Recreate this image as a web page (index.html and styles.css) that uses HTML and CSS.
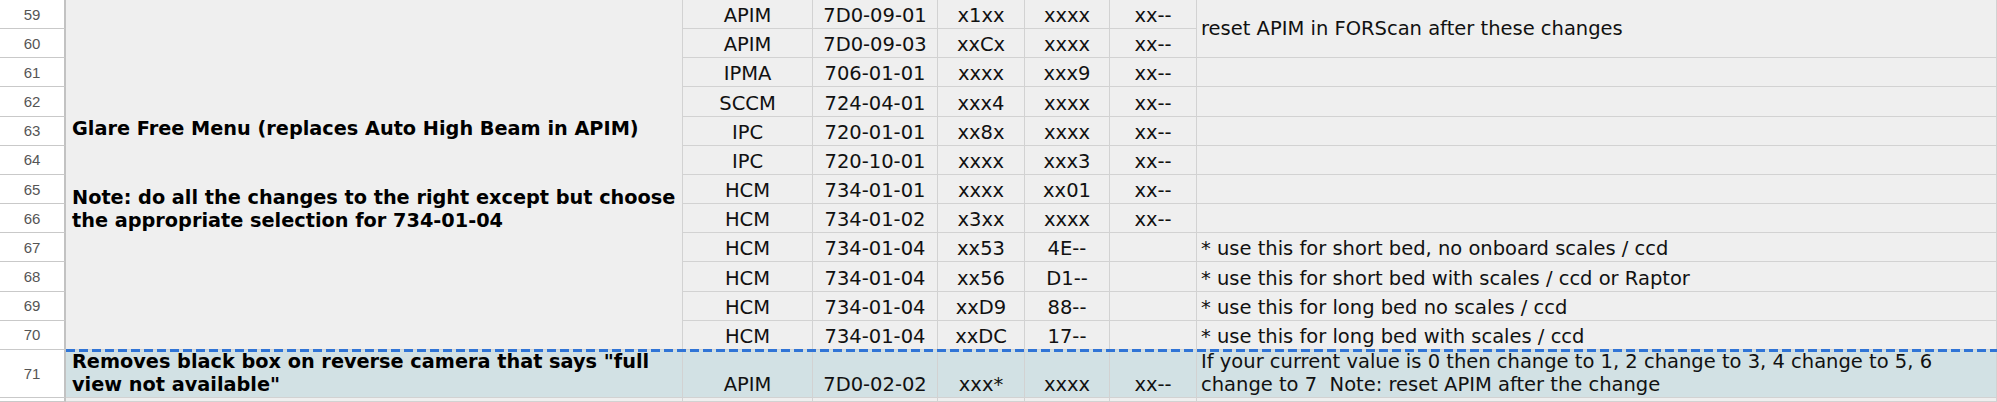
FILE: index.html
```html
<!DOCTYPE html>
<html>
<head>
<meta charset="utf-8">
<link rel="stylesheet" href="styles.css">
</head>
<body>
<div class="sheet">
  <div class="num">59</div>
  <div class="cell merged-b"><div class="btext">Glare Free Menu (replaces Auto High Beam in APIM)<br><br><br>Note: do all the changes to the right except but choose the appropriate selection for 734-01-04</div></div>
  <div class="cell c">APIM</div><div class="cell c">7D0-09-01</div><div class="cell c">x1xx</div><div class="cell c">xxxx</div><div class="cell c">xx--</div>
  <div class="cell h merged-h">reset APIM in FORScan after these changes</div>

  <div class="num">60</div>
  <div class="cell c">APIM</div><div class="cell c">7D0-09-03</div><div class="cell c">xxCx</div><div class="cell c">xxxx</div><div class="cell c">xx--</div>

  <div class="num">61</div>
  <div class="cell c">IPMA</div><div class="cell c">706-01-01</div><div class="cell c">xxxx</div><div class="cell c">xxx9</div><div class="cell c">xx--</div><div class="cell h"></div>

  <div class="num">62</div>
  <div class="cell c">SCCM</div><div class="cell c">724-04-01</div><div class="cell c">xxx4</div><div class="cell c">xxxx</div><div class="cell c">xx--</div><div class="cell h"></div>

  <div class="num">63</div>
  <div class="cell c">IPC</div><div class="cell c">720-01-01</div><div class="cell c">xx8x</div><div class="cell c">xxxx</div><div class="cell c">xx--</div><div class="cell h"></div>

  <div class="num">64</div>
  <div class="cell c">IPC</div><div class="cell c">720-10-01</div><div class="cell c">xxxx</div><div class="cell c">xxx3</div><div class="cell c">xx--</div><div class="cell h"></div>

  <div class="num">65</div>
  <div class="cell c">HCM</div><div class="cell c">734-01-01</div><div class="cell c">xxxx</div><div class="cell c">xx01</div><div class="cell c">xx--</div><div class="cell h"></div>

  <div class="num">66</div>
  <div class="cell c">HCM</div><div class="cell c">734-01-02</div><div class="cell c">x3xx</div><div class="cell c">xxxx</div><div class="cell c">xx--</div><div class="cell h"></div>

  <div class="num">67</div>
  <div class="cell c">HCM</div><div class="cell c">734-01-04</div><div class="cell c">xx53</div><div class="cell c">4E--</div><div class="cell c"></div><div class="cell h">* use this for short bed, no onboard scales / ccd</div>

  <div class="num">68</div>
  <div class="cell c">HCM</div><div class="cell c">734-01-04</div><div class="cell c">xx56</div><div class="cell c">D1--</div><div class="cell c"></div><div class="cell h">* use this for short bed with scales / ccd or Raptor</div>

  <div class="num">69</div>
  <div class="cell c">HCM</div><div class="cell c">734-01-04</div><div class="cell c">xxD9</div><div class="cell c">88--</div><div class="cell c"></div><div class="cell h">* use this for long bed no scales / ccd</div>

  <div class="num">70</div>
  <div class="cell c">HCM</div><div class="cell c">734-01-04</div><div class="cell c">xxDC</div><div class="cell c">17--</div><div class="cell c"></div><div class="cell h">* use this for long bed with scales / ccd</div>

  <div class="num">71</div>
  <div class="cell b71"><div class="btext">Removes black box on reverse camera that says "full view not available"</div></div>
  <div class="cell c blue">APIM</div><div class="cell c blue">7D0-02-02</div><div class="cell c blue">xxx*</div><div class="cell c blue">xxxx</div><div class="cell c blue">xx--</div>
  <div class="cell h blue">If your current value is 0 then change to 1, 2 change to 3, 4 change to 5, 6 change to 7&nbsp; Note: reset APIM after the change</div>

  <div class="num"></div>
  <div class="cell"></div><div class="cell"></div><div class="cell"></div><div class="cell"></div><div class="cell"></div><div class="cell"></div><div class="cell"></div>

  <div class="marquee"></div>
</div>
</body>
</html>
```
FILE: styles.css
```css
html, body {
  margin: 0;
  padding: 0;
  background: #efefef;
}
body {
  width: 1997px;
  height: 402px;
  overflow: hidden;
}
.sheet {
  position: relative;
  display: grid;
  grid-template-columns: 66px 617px 130px 125px 87px 85px 87px 800px;
  grid-template-rows: repeat(12, 29.1667px) 48px 4px;
  font-family: "DejaVu Sans", Verdana, sans-serif;
  font-size: 19.5px;
  line-height: 23px;
  color: #111;
}
.num {
  box-sizing: border-box;
  background: #fff;
  border-right: 2px solid #c2c2c2;
  border-bottom: 1px solid #c9c9c9;
  font-family: "Liberation Sans", Arial, sans-serif;
  font-size: 15px;
  color: #555;
  display: flex;
  align-items: center;
  justify-content: center;
}
.cell {
  box-sizing: border-box;
  background: #efefef;
  border-right: 1px solid #d2d2d2;
  border-bottom: 1px solid #d2d2d2;
  display: flex;
  align-items: flex-end;
  padding: 0 4px 1px 4px;
  white-space: nowrap;
  overflow: hidden;
}
.c {
  justify-content: center;
}
.h {
  justify-content: flex-start;
}
.merged-b {
  grid-row: span 12;
  align-items: center;
  padding: 0 0 0 6px;
  white-space: normal;
}
.merged-h {
  grid-row: span 2;
  align-items: center;
  padding-bottom: 0;
}
.btext {
  font-weight: bold;
  font-size: 19.3px;
  color: #000;
  white-space: normal;
}
.b71 {
  background: #d2e1e4;
  align-items: center;
  padding: 0 0 0 6px;
  white-space: normal;
}
.blue {
  background: #d2e1e4;
}
.h.blue {
  white-space: normal;
  align-items: center;
  padding-bottom: 0;
}
.marquee {
  position: absolute;
  left: 66px;
  right: 0;
  top: 349px;
  height: 3px;
  background: repeating-linear-gradient(90deg, #2f74d6 0 9px, transparent 9px 13px);
}
```
